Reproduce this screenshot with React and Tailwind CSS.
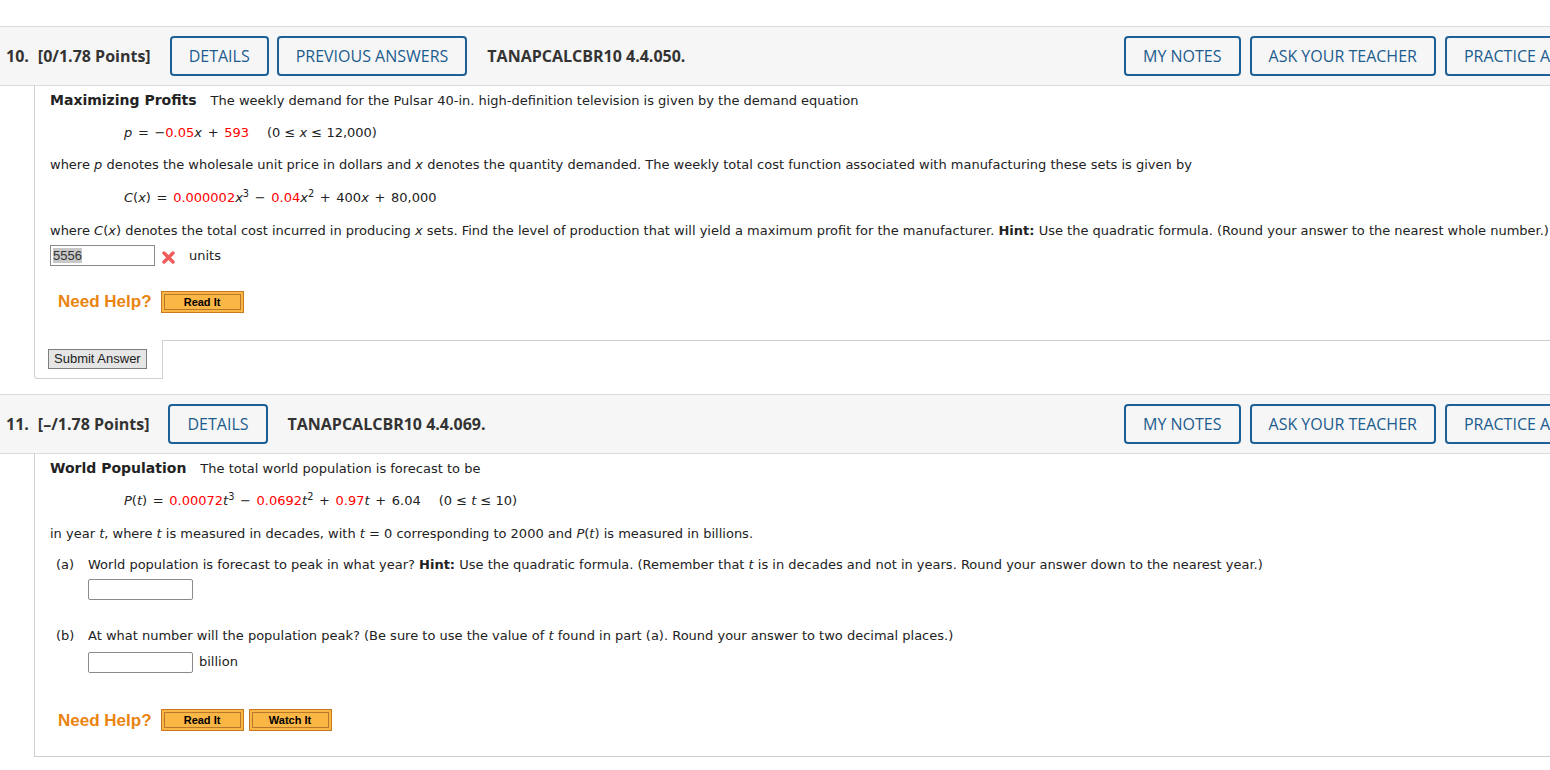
import React from 'react'

const RED = 'text-[#ff0000]'

function Op({ children }) {
  return <span className="mx-[1.5px]">{children}</span>
}

function HeadBtn({ children }) {
  return (
    <div className="flex h-[40px] items-center rounded-[4px] border-2 border-[#1d6096] px-[17px] text-[16px] text-[#1d5c8e]">
      {children}
    </div>
  )
}

function Header({ num, points, code, prev }) {
  return (
    <div className="w-full overflow-hidden border-y border-[#dcdcdc] bg-[#f6f6f6]">
      <div className="flex w-[1645px] items-center py-[9px] pl-[6px] font-['Open_Sans',sans-serif]">
        <span className="text-[16px] font-bold text-[#333]">{num}</span>
        <span className="ml-[9px] text-[16px] font-bold text-[#333]">{points}</span>
        <div className="ml-[19px] flex gap-[8px]">
          <HeadBtn>DETAILS</HeadBtn>
          {prev && <HeadBtn>PREVIOUS ANSWERS</HeadBtn>}
        </div>
        <span className="ml-[20px] text-[16px] font-bold text-[#333]">{code}</span>
        <div className="ml-auto flex gap-[9px] pr-[12px]">
          <HeadBtn>MY NOTES</HeadBtn>
          <HeadBtn>ASK YOUR TEACHER</HeadBtn>
          <HeadBtn>PRACTICE ANOTHER</HeadBtn>
        </div>
      </div>
    </div>
  )
}

function HelpBtn({ children, w }) {
  return (
    <div className={`flex h-[22px] items-center justify-center border border-[#c9791f] bg-[#fbb746] p-[2px] ${w}`}>
      <div className="flex h-full w-full items-center justify-center border border-[#b8772a] font-['Liberation_Sans',Arial,sans-serif] text-[11px] font-bold text-black">
        {children}
      </div>
    </div>
  )
}

function NeedHelp({ watch }) {
  return (
    <div className="flex items-center gap-[9px] pl-[8px]">
      <span className="font-['Liberation_Sans',Arial,sans-serif] text-[17px] font-bold text-[#ea8410]">Need Help?</span>
      <div className="flex gap-[5px]">
        <HelpBtn w="w-[83px]">Read It</HelpBtn>
        {watch && <HelpBtn w="w-[83px]">Watch It</HelpBtn>}
      </div>
    </div>
  )
}

function XMark() {
  return (
    <svg width="15" height="15" viewBox="0 0 15 15" className="mt-[3px]">
      <path d="M3 3 L12 12 M12 3 L3 12" stroke="#f15a5a" strokeWidth="3.4" strokeLinecap="round" />
    </svg>
  )
}

export default function App() {
  return (
    <div className="min-h-[770px] w-[1550px] overflow-hidden bg-white font-['DejaVu_Sans',Verdana,sans-serif] text-[13px] text-[#222]">
      <div className="h-[26px]" />

      <Header num="10." points="[0/1.78 Points]" code="TANAPCALCBR10 4.4.050." prev />

      <div className="ml-[34px] border-l border-[#cfcfcf]">
        <div className="flex flex-col pl-[15px] pt-[4px]">
          <p className="h-[33px] whitespace-nowrap leading-[20px]">
            <b className="text-[14px]">Maximizing Profits</b>
            <span className="ml-[14px]">The weekly demand for the Pulsar 40-in. high-definition television is given by the demand equation</span>
          </p>
          <p className="ml-[74px] h-[32px] whitespace-nowrap leading-[20px]">
            <i>p</i> <Op>=</Op> −<span className={RED}>0.05</span><i>x</i> <Op>+</Op> <span className={RED}>593</span>
            <span className="ml-[18px]">(0 ≤ <i>x</i> ≤ 12,000)</span>
          </p>
          <p className="h-[33px] whitespace-nowrap leading-[20px]">
            where <i>p</i> denotes the wholesale unit price in dollars and <i>x</i> denotes the quantity demanded. The weekly total cost function associated with manufacturing these sets is given by
          </p>
          <p className="ml-[74px] h-[33px] whitespace-nowrap leading-[20px]">
            <i>C</i>(<i>x</i>) <Op>=</Op> <span className={RED}>0.000002</span><i>x</i><sup>3</sup> <Op>−</Op> <span className={RED}>0.04</span><i>x</i><sup>2</sup> <Op>+</Op> 400<i>x</i> <Op>+</Op> 80,000
          </p>
          <p className="h-[24px] whitespace-nowrap leading-[20px]">
            where <i>C</i>(<i>x</i>) denotes the total cost incurred in producing <i>x</i> sets. Find the level of production that will yield a maximum profit for the manufacturer. <b>Hint:</b> Use the quadratic formula. (Round your answer to the nearest whole number.)
          </p>
          <div className="flex items-center">
            <div className="flex h-[21px] w-[105px] items-center border border-[#8a8a8a] px-[2px] font-['Liberation_Sans',Arial,sans-serif] text-[13px]">
              <span className="bg-[#c8c8c8] leading-[15px] text-[#333]">5556</span>
            </div>
            <div className="ml-[6px]">
              <XMark />
            </div>
            <span className="ml-[13px]">units</span>
          </div>
          <div className="mt-[23px]">
            <NeedHelp />
          </div>
        </div>
        <div className="h-[25px]" />
      </div>

      <div className="ml-[34px] flex">
        <div className="flex h-[39px] items-center rounded-bl-[4px] border-x border-b border-[#cfcfcf] pl-[13px] pr-[15px]">
          <div className="flex h-[20px] items-center border border-[#7d7d7d] bg-[#e5e5e5] px-[5px] font-['Liberation_Sans',Arial,sans-serif] text-[13px] text-[#222]">
            Submit Answer
          </div>
        </div>
        <div className="flex-1 border-t border-[#cfcfcf]" />
      </div>

      <div className="h-[15px]" />

      <Header num="11." points="[–/1.78 Points]" code="TANAPCALCBR10 4.4.069." />

      <div className="ml-[34px] border-b border-l border-[#cfcfcf]">
        <div className="flex flex-col pl-[15px] pt-[4px]">
          <p className="h-[33px] whitespace-nowrap leading-[20px]">
            <b className="text-[14px]">World Population</b>
            <span className="ml-[14px]">The total world population is forecast to be</span>
          </p>
          <p className="ml-[74px] h-[33px] whitespace-nowrap leading-[20px]">
            <i>P</i>(<i>t</i>) <Op>=</Op> <span className={RED}>0.00072</span><i>t</i><sup>3</sup> <Op>−</Op> <span className={RED}>0.0692</span><i>t</i><sup>2</sup> <Op>+</Op> <span className={RED}>0.97</span><i>t</i> <Op>+</Op> 6.04
            <span className="ml-[18px]">(0 ≤ <i>t</i> ≤ 10)</span>
          </p>
          <p className="h-[31px] whitespace-nowrap leading-[20px]">
            in year <i>t</i>, where <i>t</i> is measured in decades, with <i>t</i> = 0 corresponding to 2000 and <i>P</i>(<i>t</i>) is measured in billions.
          </p>
          <div className="flex whitespace-nowrap pl-[6px] leading-[20px]">
            <span className="w-[32px]">(a)</span>
            <span>World population is forecast to peak in what year? <b>Hint:</b> Use the quadratic formula. (Remember that <i>t</i> is in decades and not in years. Round your answer down to the nearest year.)</span>
          </div>
          <div className="mt-[4px] ml-[38px] h-[21px] w-[105px] rounded-[2px] border border-[#8a8a8a]" />
          <div className="mt-[26px] flex whitespace-nowrap pl-[6px] leading-[20px]">
            <span className="w-[32px]">(b)</span>
            <span>At what number will the population peak? (Be sure to use the value of <i>t</i> found in part (a). Round your answer to two decimal places.)</span>
          </div>
          <div className="mt-[6px] ml-[38px] flex items-center">
            <div className="h-[21px] w-[105px] rounded-[2px] border border-[#8a8a8a]" />
            <span className="ml-[6px]">billion</span>
          </div>
          <div className="mt-[35px]">
            <NeedHelp watch />
          </div>
        </div>
        <div className="h-[23px]" />
      </div>
    </div>
  )
}
